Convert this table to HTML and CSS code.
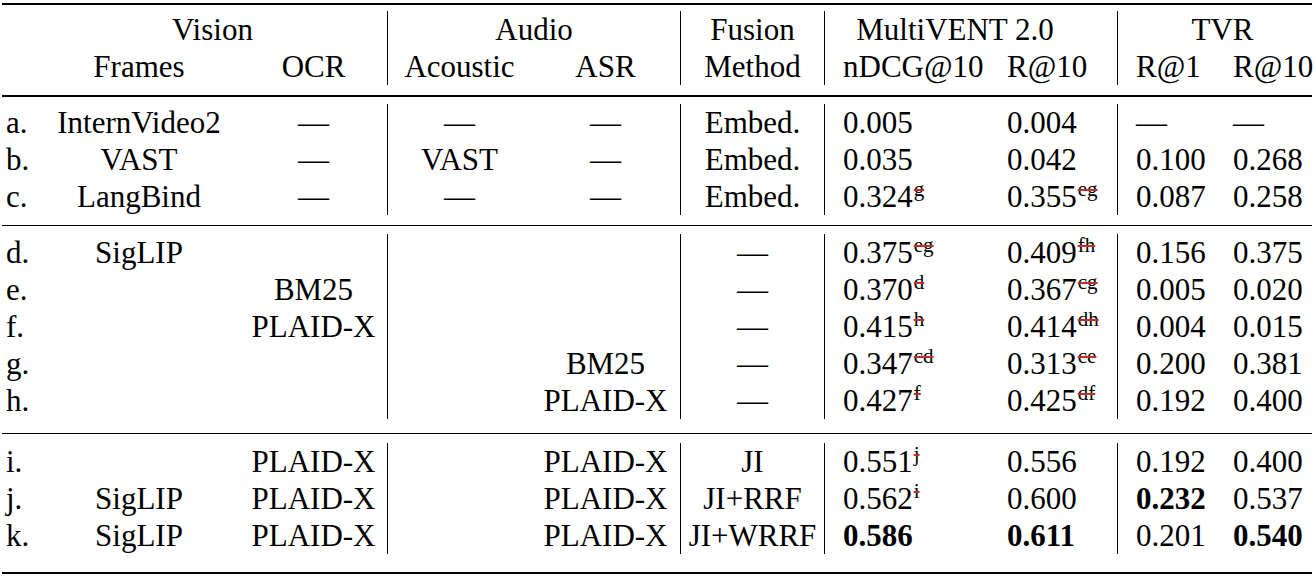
FILE: index.html
```html
<!DOCTYPE html>
<html>
<head>
<meta charset="utf-8">
<title>Retrieval results</title>
<link rel="stylesheet" href="styles.css">
</head>
<body>
<div class="tbl">
  <div class="rule top"></div>

  <div class="cell"></div>
  <div class="cell ctr span2">Vision</div>
  <div class="cell ctr span2 vl">Audio</div>
  <div class="cell ctr vl">Fusion</div>
  <div class="cell ctr span2 vl mv">MultiVENT 2.0</div>
  <div class="cell ctr span2 vl tvr">TVR</div>

  <div class="cell"></div>
  <div class="cell ctr">Frames</div>
  <div class="cell ctr">OCR</div>
  <div class="cell ctr vl">Acoustic</div>
  <div class="cell ctr">ASR</div>
  <div class="cell ctr vl">Method</div>
  <div class="cell lft vl">nDCG@10</div>
  <div class="cell lft">R@10</div>
  <div class="cell lft vl">R@1</div>
  <div class="cell lft">R@10</div>

  <div class="rule mid head-rule"></div>

  <div class="cell lab">a.</div>
  <div class="cell ctr">InternVideo2</div>
  <div class="cell ctr">—</div>
  <div class="cell ctr vl">—</div>
  <div class="cell ctr">—</div>
  <div class="cell ctr vl">Embed.</div>
  <div class="cell lft vl">0.005</div>
  <div class="cell lft">0.004</div>
  <div class="cell lft vl">—</div>
  <div class="cell lft">—</div>

  <div class="cell lab">b.</div>
  <div class="cell ctr">VAST</div>
  <div class="cell ctr">—</div>
  <div class="cell ctr vl">VAST</div>
  <div class="cell ctr">—</div>
  <div class="cell ctr vl">Embed.</div>
  <div class="cell lft vl">0.035</div>
  <div class="cell lft">0.042</div>
  <div class="cell lft vl">0.100</div>
  <div class="cell lft">0.268</div>

  <div class="cell lab">c.</div>
  <div class="cell ctr">LangBind</div>
  <div class="cell ctr">—</div>
  <div class="cell ctr vl">—</div>
  <div class="cell ctr">—</div>
  <div class="cell ctr vl">Embed.</div>
  <div class="cell lft vl">0.324<span class="sup">g</span></div>
  <div class="cell lft">0.355<span class="sup">eg</span></div>
  <div class="cell lft vl">0.087</div>
  <div class="cell lft">0.258</div>

  <div class="rule mid sec1-rule"></div>

  <div class="cell lab">d.</div>
  <div class="cell ctr">SigLIP</div>
  <div class="cell ctr"></div>
  <div class="cell ctr vl"></div>
  <div class="cell ctr"></div>
  <div class="cell ctr vl">—</div>
  <div class="cell lft vl">0.375<span class="sup">eg</span></div>
  <div class="cell lft">0.409<span class="sup">fh</span></div>
  <div class="cell lft vl">0.156</div>
  <div class="cell lft">0.375</div>

  <div class="cell lab">e.</div>
  <div class="cell ctr"></div>
  <div class="cell ctr">BM25</div>
  <div class="cell ctr vl"></div>
  <div class="cell ctr"></div>
  <div class="cell ctr vl">—</div>
  <div class="cell lft vl">0.370<span class="sup">d</span></div>
  <div class="cell lft">0.367<span class="sup">cg</span></div>
  <div class="cell lft vl">0.005</div>
  <div class="cell lft">0.020</div>

  <div class="cell lab">f.</div>
  <div class="cell ctr"></div>
  <div class="cell ctr">PLAID-X</div>
  <div class="cell ctr vl"></div>
  <div class="cell ctr"></div>
  <div class="cell ctr vl">—</div>
  <div class="cell lft vl">0.415<span class="sup">h</span></div>
  <div class="cell lft">0.414<span class="sup">dh</span></div>
  <div class="cell lft vl">0.004</div>
  <div class="cell lft">0.015</div>

  <div class="cell lab">g.</div>
  <div class="cell ctr"></div>
  <div class="cell ctr"></div>
  <div class="cell ctr vl"></div>
  <div class="cell ctr">BM25</div>
  <div class="cell ctr vl">—</div>
  <div class="cell lft vl">0.347<span class="sup">cd</span></div>
  <div class="cell lft">0.313<span class="sup">ce</span></div>
  <div class="cell lft vl">0.200</div>
  <div class="cell lft">0.381</div>

  <div class="cell lab">h.</div>
  <div class="cell ctr"></div>
  <div class="cell ctr"></div>
  <div class="cell ctr vl"></div>
  <div class="cell ctr">PLAID-X</div>
  <div class="cell ctr vl">—</div>
  <div class="cell lft vl">0.427<span class="sup">f</span></div>
  <div class="cell lft">0.425<span class="sup">df</span></div>
  <div class="cell lft vl">0.192</div>
  <div class="cell lft">0.400</div>

  <div class="rule mid sec2-rule"></div>

  <div class="cell lab">i.</div>
  <div class="cell ctr"></div>
  <div class="cell ctr">PLAID-X</div>
  <div class="cell ctr vl"></div>
  <div class="cell ctr">PLAID-X</div>
  <div class="cell ctr vl">JI</div>
  <div class="cell lft vl">0.551<span class="sup">j</span></div>
  <div class="cell lft">0.556</div>
  <div class="cell lft vl">0.192</div>
  <div class="cell lft">0.400</div>

  <div class="cell lab">j.</div>
  <div class="cell ctr">SigLIP</div>
  <div class="cell ctr">PLAID-X</div>
  <div class="cell ctr vl"></div>
  <div class="cell ctr">PLAID-X</div>
  <div class="cell ctr vl">JI+RRF</div>
  <div class="cell lft vl">0.562<span class="sup">i</span></div>
  <div class="cell lft">0.600</div>
  <div class="cell lft vl b">0.232</div>
  <div class="cell lft">0.537</div>

  <div class="cell lab">k.</div>
  <div class="cell ctr">SigLIP</div>
  <div class="cell ctr">PLAID-X</div>
  <div class="cell ctr vl"></div>
  <div class="cell ctr">PLAID-X</div>
  <div class="cell ctr vl">JI+WRRF</div>
  <div class="cell lft vl b">0.586</div>
  <div class="cell lft b">0.611</div>
  <div class="cell lft vl">0.201</div>
  <div class="cell lft b">0.540</div>

  <div class="rule bot"></div>
</div>
</body>
</html>
```

FILE: styles.css
```css
* { box-sizing: border-box; }

html, body {
  margin: 0;
  padding: 0;
  background: #fff;
}

body {
  font-family: "Liberation Serif", "Tinos", "Times New Roman", "DejaVu Serif", serif;
  color: #000;
}

.tbl {
  display: grid;
  grid-template-columns: 36px 202px 147px 144px 149px 144px 165px 128px 98px 97px;
  width: 1310px;
  margin-left: 2px;
  padding-top: 3px;
  font-family: "Liberation Serif", "Tinos", "Times New Roman", "DejaVu Serif", serif;
  font-size: 31px;
}

.rule {
  grid-column: 1 / -1;
  background: #000;
}

.rule.top {
  height: 2px;
  margin-bottom: 6px;
}

.rule.mid { height: 1.5px; }

.head-rule { margin: 10px 0 7.5px; }

.sec1-rule { margin: 9.5px 0 8px; }

.sec2-rule { margin: 13.5px 0 8.5px; }

.rule.bot {
  height: 2px;
  margin-top: 18.5px;
}

.cell {
  height: 37px;
  line-height: 37px;
  white-space: nowrap;
}

.ctr { text-align: center; }

.lft {
  text-align: left;
  padding-left: 18px;
}

.lab { padding-left: 4px; }

.vl { border-left: 1px solid #000; }

.span2 { grid-column: span 2; }

.mv { padding-right: 32px; }

.tvr { padding-left: 15px; }

.b { font-weight: 700; }

.sup {
  font-size: 21px;
  line-height: 0;
  vertical-align: 11px;
  margin-left: 1px;
  text-decoration: line-through;
  text-decoration-color: #c0302a;
  text-decoration-thickness: 1.5px;
}
```
